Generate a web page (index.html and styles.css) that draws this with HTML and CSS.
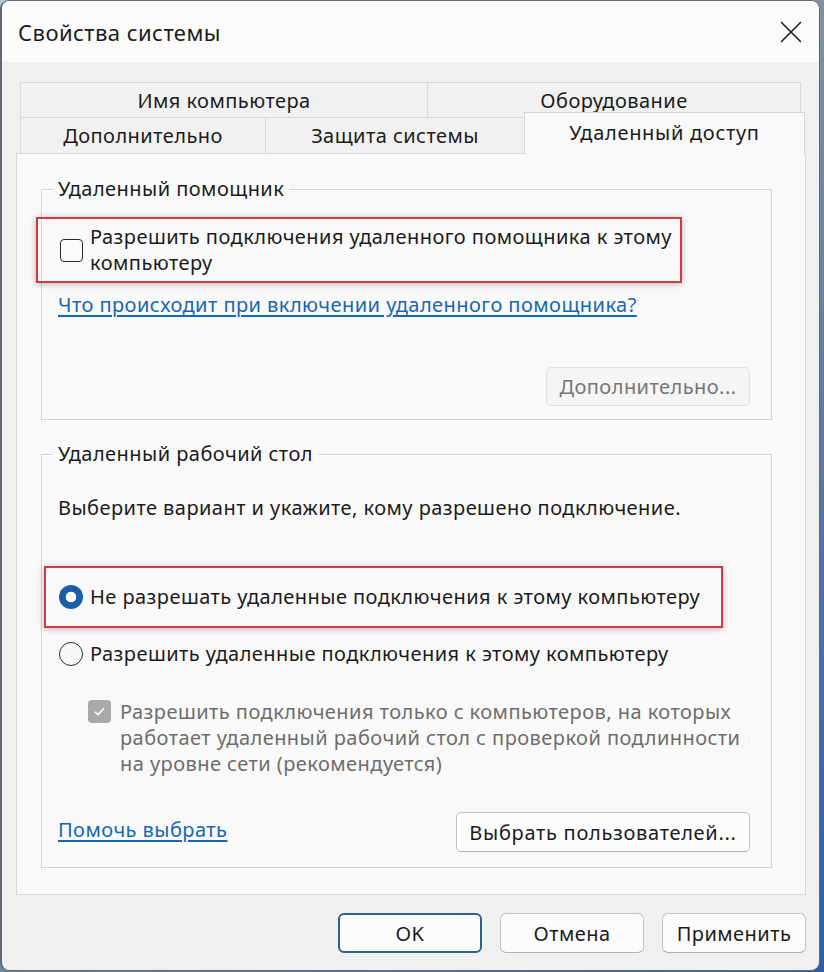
FILE: index.html
```html
<!DOCTYPE html>
<html lang="ru">
<head>
<meta charset="utf-8">
<title>Свойства системы</title>
<link rel="stylesheet" href="styles.css">
</head>
<body>
<div class="window">
  <div class="titlebar">
    <span class="title">Свойства системы</span>
    <span class="close">
      <svg width="22" height="22" viewBox="0 0 22 22"><path d="M1.5 1.5 L20.5 20.5 M20.5 1.5 L1.5 20.5" stroke="#1f1f1f" stroke-width="1.6" fill="none" stroke-linecap="round"/></svg>
    </span>
  </div>
  <div class="client">
    <div class="tabs">
      <div class="tabrow back">
        <div class="tab t-name">Имя компьютера</div>
        <div class="tab t-hw">Оборудование</div>
      </div>
      <div class="tabrow front">
        <div class="tab t-adv">Дополнительно</div>
        <div class="tab t-prot">Защита системы</div>
        <div class="tab t-remote active">Удаленный доступ</div>
      </div>
    </div>
    <div class="panel">
      <fieldset class="group g1">
        <legend>Удаленный помощник</legend>
        <div class="mark mark1">
          <span class="chk"></span>
          <span class="label">Разрешить подключения удаленного помощника к этому<br>компьютеру</span>
        </div>
        <a class="link link1" href="#">Что происходит при включении удаленного помощника?</a>
        <div class="btnrow">
          <span class="btn disabled">Дополнительно...</span>
        </div>
      </fieldset>
      <fieldset class="group g2">
        <legend>Удаленный рабочий стол</legend>
        <p class="hint">Выберите вариант и укажите, кому разрешено подключение.</p>
        <div class="mark mark2">
          <span class="radio on"></span>
          <span class="label">Не разрешать удаленные подключения к этому компьютеру</span>
        </div>
        <div class="optrow">
          <span class="radio"></span>
          <span class="label">Разрешить удаленные подключения к этому компьютеру</span>
        </div>
        <div class="nlarow">
          <span class="chk dis">
            <svg width="15" height="15" viewBox="0 0 15 15"><path d="M3 7.8 L6 10.6 L12 4.2" stroke="#ffffff" stroke-width="1.5" fill="none"/></svg>
          </span>
          <span class="label dim">Разрешить подключения только с компьютеров, на которых<br>работает удаленный рабочий стол с проверкой подлинности<br>на уровне сети (рекомендуется)</span>
        </div>
        <div class="foot">
          <a class="link link2" href="#">Помочь выбрать</a>
          <span class="btn users">Выбрать пользователей...</span>
        </div>
      </fieldset>
    </div>
    <div class="dlgbtns">
      <span class="btn dlg ok">OK</span>
      <span class="btn dlg">Отмена</span>
      <span class="btn dlg">Применить</span>
    </div>
  </div>
</div>
</body>
</html>
```

FILE: styles.css
```css
* { box-sizing: border-box; }
html, body { margin: 0; padding: 0; }
body {
  width: 824px;
  height: 972px;
  overflow: hidden;
  background: linear-gradient(135deg, #b7c2cd 0%, #8192a3 45%, #2b5fa6 100%);
  font-family: "Noto Sans", "Open Sans", "DejaVu Sans", sans-serif;
  font-size: 20px;
  letter-spacing: 0.45px;
  color: #1b1b1b;
}
.window {
  width: 820px;
  height: 971px;
  border: 1px solid #5d6975;
  border-left-width: 2px;
  border-radius: 9px;
  background: #f0f0f0;
  overflow: hidden;
  display: flex;
  flex-direction: column;
}
.titlebar {
  height: 61px;
  flex: none;
  background: #fbfbfb;
  display: flex;
  align-items: center;
  justify-content: space-between;
  padding: 0 17px 0 16px;
}
.title { font-size: 22px; line-height: 28px; }
.close { display: block; }
.close svg { display: block; }

.client { padding: 20px 13px 0 14px; }

.tabrow { display: flex; margin-left: 4px; }
.tabrow.back { height: 35px; }
.tabrow.front { height: 36px; align-items: flex-end; }
.tab {
  border: 1px solid #d9d9d9;
  border-bottom: none;
  background: #f1f1f1;
  display: flex;
  align-items: center;
  justify-content: center;
  margin-right: -1px;
  white-space: nowrap;
}
.back .tab { height: 36px; }
.front .tab { height: 36px; }
.t-name { width: 408px; }
.t-hw { width: 374px; }
.t-adv { width: 246px; }
.t-prot { width: 260px; }
.t-remote { width: 281px; letter-spacing: 0.7px; }
.tab.active {
  position: relative;
  z-index: 2;
  height: 42px;
  margin-bottom: -1px;
  background: #f9f9f9;
  border-color: #d6d6d6;
  padding-bottom: 2px;
}

.panel {
  width: 790px;
  height: 742px;
  border: 1px solid #d8d8d8;
  background: #f9f9f9;
  padding-top: 22px;
}

.group {
  margin: 0 33px 0 24px;
  padding: 0;
  border: 1px solid #d4d4d4;
  box-shadow: inset 1px 1px 0 #ffffff;
  min-width: 0;
}
.group legend {
  padding: 0 5px;
  margin-left: 11px;
  line-height: 26px;
}
.g1 { padding-bottom: 13px; }
.g2 { margin-top: 21px; padding-bottom: 15px; }

.label { line-height: 26px; white-space: nowrap; }

.mark {
  display: flex;
  align-items: center;
  border: 2px solid #d03b42;
  box-shadow: 0 1px 6px rgba(0, 0, 0, 0.28);
}
.mark1 {
  margin: 15px 0 0 -6px;
  width: 646px;
  height: 66px;
  padding-left: 22px;
  gap: 7px;
}
.mark2 {
  margin: 45px 0 0 2px;
  width: 679px;
  height: 62px;
  padding-left: 13px;
  gap: 7px;
}

.chk {
  flex: none;
  width: 23px;
  height: 23px;
  border: 1.5px solid #2a2a2a;
  border-radius: 4px;
  background: #fbfbfb;
}
.chk.dis {
  border: none;
  background: #a9a9a9;
  display: flex;
  align-items: center;
  justify-content: center;
  margin-top: 1px;
}
.chk.dis svg { display: block; }

.radio {
  flex: none;
  width: 24px;
  height: 24px;
  border-radius: 50%;
  border: 1.5px solid #2d2d2d;
  background: #f8f8f8;
}
.radio.on {
  border: none;
  background: radial-gradient(circle, #ffffff 0 5px, #1b5ea6 5.6px);
}

.link {
  display: block;
  color: #1767b4;
  text-decoration: underline;
  text-underline-offset: 3px;
  line-height: 26px;
}
.link1 { margin: 9px 0 0 16px; width: max-content; }

.btnrow {
  display: flex;
  justify-content: flex-end;
  margin-top: 49px;
  padding-right: 21px;
}
.btn {
  display: flex;
  align-items: center;
  justify-content: center;
  border: 1px solid #c4c4c4;
  border-bottom-color: #b0b0b0;
  border-radius: 5px;
  background: #fcfcfc;
  white-space: nowrap;
}
.btn.disabled {
  width: 204px;
  height: 39px;
  background: #f5f5f5;
  border-color: #e2e2e2;
  color: #767676;
}

.hint { margin: 28px 0 0 16px; line-height: 26px; }

.optrow {
  display: flex;
  align-items: center;
  gap: 7px;
  margin-top: 13px;
  padding-left: 17px;
  height: 26px;
}
.nlarow {
  display: flex;
  align-items: flex-start;
  gap: 9px;
  margin-top: 32px;
  padding-left: 46px;
}
.dim { color: #6d6d6d; }

.foot {
  display: flex;
  justify-content: space-between;
  align-items: center;
  margin-top: 35px;
  padding: 0 21px 0 16px;
}
.link2 { margin-top: -5px; }
.btn.users { width: 294px; height: 40px; letter-spacing: 0.7px; }

.dlgbtns {
  display: flex;
  justify-content: flex-end;
  gap: 18px;
  margin-top: 18px;
}
.btn.dlg {
  width: 144px;
  height: 40px;
  border-radius: 6px;
}
.btn.ok {
  border: 2px solid #2f6289;
}
```
